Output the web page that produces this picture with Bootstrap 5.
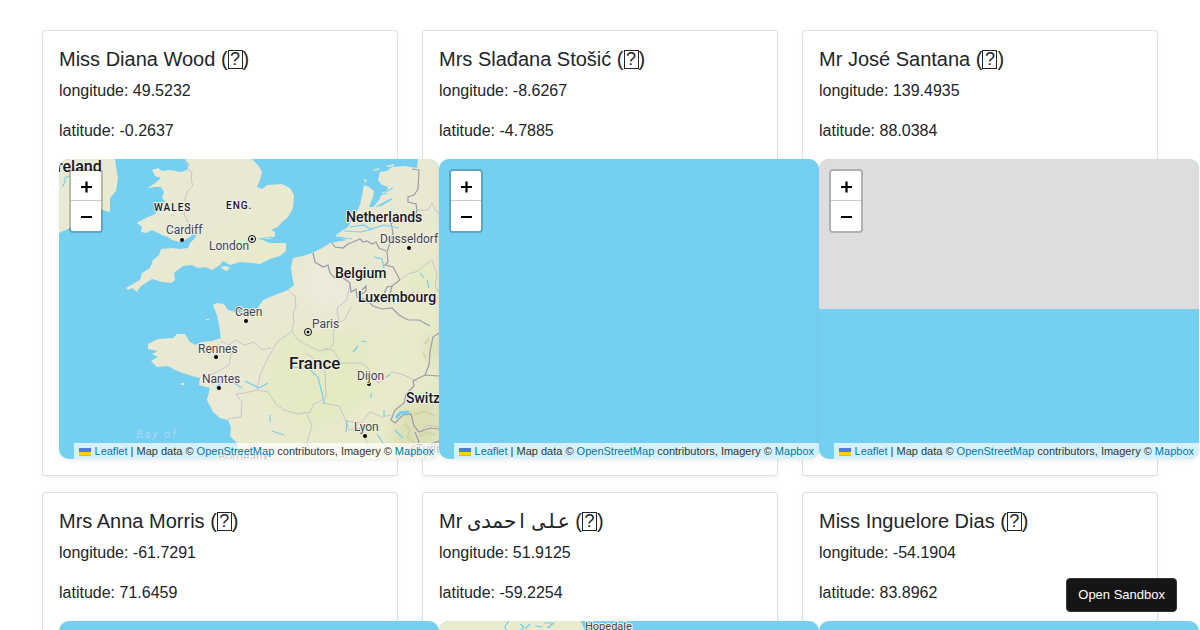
<!DOCTYPE html>
<html lang="en">
<head>
<meta charset="utf-8">
<meta name="viewport" content="width=device-width, initial-scale=1">
<title>People on the map</title>
<link href="https://cdn.jsdelivr.net/npm/bootstrap@5.3.0/dist/css/bootstrap.min.css" rel="stylesheet">
<style>
  body { font-family: "Liberation Sans", "DejaVu Sans Mono", sans-serif; }
  .page-body { padding-top: 30px; }
  .person-card { border-color: #dfdfdf; border-radius: 4px; }
  .no-glyph {
    display: inline-block; width: 15px; height: 19px; border: 1px solid currentColor;
    font-size: 18px; line-height: 17px; text-align: center; vertical-align: 1px;
  }
  /* the map is wider than its card and runs over the gutter and the next card's edge */
  .map-view {
    z-index: 1; margin-right: -58px; height: 300px; border-radius: 10px;
    background: #75cff0; overflow: hidden; font-size: 11px;
  }
  .map-view > svg { display: block; width: 100%; height: 100%; }
  .map-blank { height: 50%; background: #ddd; }
  .zoom-bar {
    top: 10px; left: 10px; border: 2px solid rgba(0,0,0,.2);
    border-radius: 4px; background-clip: padding-box; overflow: hidden;
  }
  .zoom-bar button {
    display: block; width: 30px; height: 30px; padding: 0; border: 0;
    background: #fff; color: #000;
  }
  .zoom-bar button:first-child { border-bottom: 1px solid #ccc; }
  .zoom-bar svg { display: block; margin: 2px auto 0; }
  .map-credit {
    right: 0; bottom: 0; padding: 0 5px; line-height: 16px; white-space: nowrap;
    background: rgba(255,255,255,.7); color: #333;
  }
  .map-credit a { color: #0078a8; text-decoration: none; }
  .sandbox-btn {
    right: 23px; bottom: 18px; z-index: 10; padding: 6px 11px;
    background: #151515; border: 1px solid #343434; border-radius: 4px;
    color: #fff; font-size: 13px; line-height: 20px;
  }
  .water { fill: none; stroke: #75cff0; stroke-width: 1.2; }
  .region { fill: none; stroke: #c6c5c8; stroke-width: 1; }
  .frontier { fill: none; stroke: #9c9aa9; stroke-width: 1.2; }
  .map-label { font-family: Roboto, sans-serif; paint-order: stroke; stroke: #f2f1e6; stroke-width: 2; stroke-linejoin: round; }
  .state-label { font-size: 14px; font-weight: 500; fill: #17181f; }
  .city-label { font-size: 12px; fill: #42444f; }
</style>
</head>
<body>
<svg width="0" height="0" class="position-absolute" aria-hidden="true">
  <symbol id="flag" viewBox="0 0 12 8"><path fill="#4C7BE1" d="M0 0h12v4H0z"/><path fill="#FFD500" d="M0 4h12v3H0z"/><path fill="#E0BC00" d="M0 7h12v1H0z"/></symbol>
  <symbol id="plus" viewBox="0 0 12 12"><path d="M6.500 .5v11M1 6h11" stroke="#000" stroke-width="2.200"/></symbol>
  <symbol id="minus" viewBox="0 0 12 12"><path d="M1 6h11" stroke="#000" stroke-width="2.200"/></symbol>
</svg>

<main class="container page-body">
  <div class="row">

    <div class="col-4 mb-3">
      <div class="card person-card shadow-sm">
        <div class="card-body">
          <h5 class="card-title">Miss Diana Wood (<span class="no-glyph">?</span>)</h5>
          <p>longitude: 49.5232</p>
          <p>latitude: -0.2637</p>
          <div class="map-view position-relative shadow-sm">
            <svg viewBox="59 159 380 300" preserveAspectRatio="xMidYMid slice" role="img" aria-label="Map of western Europe">
              <defs>
                <linearGradient id="land" x1="0" y1="0" x2="1" y2="1"><stop offset="0" stop-color="#e9ead2"/><stop offset=".5" stop-color="#e9e9d3"/><stop offset="1" stop-color="#e7ebc6"/></linearGradient>
                <filter id="soft" x="-50%" y="-50%" width="200%" height="200%"><feGaussianBlur stdDeviation="7"/></filter>
                <clipPath id="mainland"><path d="M418 159L417 168 405 166 392 167 387 171 380 172 378 180 382 185 388 187 387 190 382 193 379 200 373 207 369 207 371 202 373 197 374 191 369 187 364 185 362 195 360 205 355 215 348 227 340 232 335 236 347 240 330 243 322 248 312 253 303 256 293 258 291 267 292 276 294 285 288 290 275 295 263 300 257 309 250 312 240 313 228 310 224 304 217 303 213 305 217 315 219 325 221 338 212 341 202 342 195 345 190 342 185 334 177 334 173 338 158 339 148 344 148 349 158 351 152 354 158 357 151 361 157 367 168 366 175 370 183 373 192 376 200 378 199 385 210 388 207 400 213 412 220 418 228 420 231 427 230 436 237 443 240 459H439V159Z"/></clipPath>
              </defs>
              <g fill="url(#land)">
                <path d="M59 159H115L116 166 118 178 116 191 110 198 110 212 103 210 90 214 80 221 70 228 59 233Z"/>
                <path d="M185 159L189 165 187 170 180 172 170 170 162 171 158 168 152 170 155 176 161 178 155 183 148 188 155 187 161 187 164 192 162 198 165 201 161 207 155 214 148 217 140 221 137 223 142 227 141 232 146 233 152 230 162 235 168 237 172 240 180 242 185 240 190 237 194 233 198 232 195 238 190 243 188 248 180 249 172 248 161 249 159 255 153 260 150 268 142 273 140 280 133 284 126 288 128 290 132 288 137 292 140 287 147 282 152 279 162 282 171 283 175 280 174 273 183 266 192 265 198 268 205 267 212 270 220 265 223 261 230 265 240 262 252 263 260 264 270 259 280 256 286 251 286 243 270 243 260 239 270 239 275 236 275 232 271 230 278 227 281 223 287 218 291 212 293 208 294 195 290 188 282 184 267 185 262 189 257 187 260 180 262 172 258 165 252 159Z"/>
                <path d="M220 267L226 266 230 268 226 271ZM364 179L367 180 365 183ZM373 170l6-2 1 1-6 2ZM386 166l8-2v2l-7 1ZM206 319h3v1h-3ZM181 383h3v2h-3Z"/>
                <path d="M418 159L417 168 405 166 392 167 387 171 380 172 378 180 382 185 388 187 387 190 382 193 379 200 373 207 369 207 371 202 373 197 374 191 369 187 364 185 362 195 360 205 355 215 348 227 340 232 335 236 347 240 330 243 322 248 312 253 303 256 293 258 291 267 292 276 294 285 288 290 275 295 263 300 257 309 250 312 240 313 228 310 224 304 217 303 213 305 217 315 219 325 221 338 212 341 202 342 195 345 190 342 185 334 177 334 173 338 158 339 148 344 148 349 158 351 152 354 158 357 151 361 157 367 168 366 175 370 183 373 192 376 200 378 199 385 210 388 207 400 213 412 220 418 228 420 231 427 230 436 237 443 240 459H439V159Z"/>
              </g>
              <g clip-path="url(#mainland)">
                <g filter="url(#soft)">
                  <path fill="#d5d7a8" opacity=".6" d="M400 410l39-18v77h-55zM425 340l14-8v30l-12-5z"/>
                  <path fill="#e3e9bd" opacity=".6" d="M405 270l20-15 14 20v25l-20 8zM280 330l80 0 20 60-60 40-60-30z"/>
                  <path fill="#edeada" d="M310 260l30 15 15 25-30 10-25-15zM210 400l25-10 5 25-15 5z"/>
                </g>
                <path fill="none" stroke="#cdceA0" opacity=".7" stroke-width="2" d="M404 424l6 5-3 8 8 6M420 436l8-4 8 3M414 415l10-4 12 5M425 344l4-6M423 353l3 6"/>
              </g>
              <g class="region">
                <path d="M185 161l3 8 4 3-1 9 2 4-5 6-3 8 1 7-2 8 4 8 3 9 8 4"/>
                <path d="M288 290l7 6 1 10-3 8 1 8-2 9 6 9 7 4 14 7 10-2 5-6-1-10 3-8 9-6 6-12M292 331l-15 11-9 16-8 17-3 15 11 2 8 12 8 6 14 4 12-2 4-8 12-6-1-26-8-11-11-8M324 348l10 3 7 12 20 0 8 6 2 8 8 6 7-6 6-5 12 3 14 7M323 403l16 3 7 15 15 2 9-11 12 5 9-2M346 421l3 9 10-2 6 10 5 12M307 414l5 12-5 16 5 17M221 341l8 4 7-5 8 5 10-3 8 8 9-2M232 350l-3 15-12 7-10 4-4 5M257 390l-12 3-9 1 6 8-1 15-13 2"/>
                <path d="M417 210l11 0 4-7 3 7 4 4M400 280l8-6 10-3 10-8 4-3 5 14-2 12 4 6M350 283l-3 17-10 8 2 14M439 427l-12-2-8 8"/>
              </g>
              <g class="frontier">
                <path d="M412 169l7 1-1 19-4 6-6 2v5l8 2 1 6-2 7-12 3-12 3 2 10-4 13-2 6 1 10-3 3 8 2 7 13M332 243l3 4 8 1 5-4 5-2 7-3 3 3 4-1 5 3 4-2 3 6 7 3M313 253l2 9 8 5 5-2 2 8 5 5 7-1 8 6 1 9 5-3 1 8 10 3 6 6 9 3 10-1 7 7 9 5 11 0 11 6M400 280l-8 6-5 1-3 7 5 8M392 286l-2 8M362 290l4-4v5l-4 3"/>
                <path d="M439 333l-6 4-3 14-1 14-4 10 14 1M425 375l-12 6 1 5-8 8-2 9-9 7-4 10 4 3 8-8 8-1 3 12 5 6 11-4 9 1M415 432l4 10-8 7 3 10M425 459l3-14 11-4"/>
              </g>
              <g class="water">
                <path d="M62 187l3-5 0-4 4-2M242 388l-8-5-12-1-6 6M245 381l14 7 9-5M292 367l17 2 9 8 5 20 1 7M350 227l14-2 6 4 14-4 15 3M344 231l17 1 12-3M338 237l14 2M385 192l8-4M380 206l12-7M376 207l15-8M377 196l10-3M374 257l8 2 2 9M420 273l4 5M427 280l2 8M361 341l6 1M353 352l5-6M386 377l4-2M371 393v5M384 410v6M347 420l-1 12M270 415v7M272 431l12 4M377 434l8 12M395 430l8 8M400 412l10 1M272 237l-14 2"/>
                <path stroke-width="3" d="M396 418l4-5 9-1"/>
              </g>
              <g fill="#000">
                <circle cx="182" cy="240" r="2"/><circle cx="409" cy="248" r="2"/><circle cx="246" cy="321" r="2"/><circle cx="216" cy="357" r="2"/><circle cx="219" cy="388" r="2"/><circle cx="369" cy="384" r="2"/><circle cx="365" cy="436" r="2"/>
                <g id="capital"><circle cx="252" cy="239" r="3.500" fill="#fff" stroke="#000"/><circle cx="252" cy="239" r="1.500"/></g>
                <use href="#capital" x="56" y="93"/>
              </g>
              <g class="map-label state-label">
                <text x="57" y="172" style="font-size:16px">reland</text>
                <text x="346" y="222">Netherlands</text>
                <text x="335" y="278">Belgium</text>
                <text x="358" y="302">Luxembourg</text>
                <text x="289" y="369" style="font-size:17px">France</text>
                <text x="406" y="403">Switz</text>
                <text x="154" y="211" style="font-size:10px;letter-spacing:1px">WALES</text>
                <text x="226" y="209" style="font-size:10px;letter-spacing:1px">ENG.</text>
              </g>
              <g class="map-label city-label">
                <text x="166" y="234">Cardiff</text>
                <text x="209" y="250">London</text>
                <text x="380" y="243">Dusseldorf</text>
                <text x="235" y="316">Caen</text>
                <text x="312" y="328">Paris</text>
                <text x="198" y="353">Rennes</text>
                <text x="202" y="383">Nantes</text>
                <text x="357" y="380">Dijon</text>
                <text x="354" y="431">Lyon</text>
                <text x="218" y="461">Bordeaux</text>
                <text x="416" y="453">Turin</text>
              </g>
              <text x="136" y="438" font-family="Roboto, sans-serif" font-size="11" font-style="italic" letter-spacing="2" fill="#a9d8f5">Bay of</text>
            </svg>
            <div class="zoom-bar position-absolute">
              <button type="button" aria-label="Zoom in"><svg width="12" height="12"><use href="#plus"/></svg></button>
              <button type="button" aria-label="Zoom out"><svg width="12" height="12"><use href="#minus"/></svg></button>
            </div>
            <div class="map-credit position-absolute"><a href="#"><svg width="12" height="8"><use href="#flag"/></svg> Leaflet</a> | Map data © <a href="#">OpenStreetMap</a> contributors, Imagery © <a href="#">Mapbox</a></div>
          </div>
        </div>
      </div>
    </div>

    <div class="col-4 mb-3">
      <div class="card person-card shadow-sm">
        <div class="card-body">
          <h5 class="card-title">Mrs Slađana Stošić (<span class="no-glyph">?</span>)</h5>
          <p>longitude: -8.6267</p>
          <p>latitude: -4.7885</p>
          <div class="map-view position-relative shadow-sm">
            <div class="zoom-bar position-absolute">
              <button type="button" aria-label="Zoom in"><svg width="12" height="12"><use href="#plus"/></svg></button>
              <button type="button" aria-label="Zoom out"><svg width="12" height="12"><use href="#minus"/></svg></button>
            </div>
            <div class="map-credit position-absolute"><a href="#"><svg width="12" height="8"><use href="#flag"/></svg> Leaflet</a> | Map data © <a href="#">OpenStreetMap</a> contributors, Imagery © <a href="#">Mapbox</a></div>
          </div>
        </div>
      </div>
    </div>

    <div class="col-4 mb-3">
      <div class="card person-card shadow-sm">
        <div class="card-body">
          <h5 class="card-title">Mr José Santana (<span class="no-glyph">?</span>)</h5>
          <p>longitude: 139.4935</p>
          <p>latitude: 88.0384</p>
          <div class="map-view position-relative shadow-sm">
            <div class="map-blank"></div>
            <div class="zoom-bar position-absolute">
              <button type="button" aria-label="Zoom in"><svg width="12" height="12"><use href="#plus"/></svg></button>
              <button type="button" aria-label="Zoom out"><svg width="12" height="12"><use href="#minus"/></svg></button>
            </div>
            <div class="map-credit position-absolute"><a href="#"><svg width="12" height="8"><use href="#flag"/></svg> Leaflet</a> | Map data © <a href="#">OpenStreetMap</a> contributors, Imagery © <a href="#">Mapbox</a></div>
          </div>
        </div>
      </div>
    </div>

    <div class="col-4 mb-3">
      <div class="card person-card shadow-sm">
        <div class="card-body">
          <h5 class="card-title">Mrs Anna Morris (<span class="no-glyph">?</span>)</h5>
          <p>longitude: -61.7291</p>
          <p>latitude: 71.6459</p>
          <div class="map-view position-relative shadow-sm"></div>
        </div>
      </div>
    </div>

    <div class="col-4 mb-3">
      <div class="card person-card shadow-sm">
        <div class="card-body">
          <h5 class="card-title">Mr علی احمدی (<span class="no-glyph">?</span>)</h5>
          <p>longitude: 51.9125</p>
          <p>latitude: -59.2254</p>
          <div class="map-view position-relative shadow-sm">
            <svg viewBox="0 0 380 300" preserveAspectRatio="xMidYMid slice" role="img" aria-label="Map of Labrador">
              <path fill="#e9ebcf" d="M0 0H142L146 10 160 25 170 60 200 100 190 300H0Z"/>
              <path class="water" d="M70 0l-4 5 1 5M81 3l4 3-3 3M86 8l5-5M96 5l8 1M105 2l8 0-3 5M108 7l7-5"/>
              <text class="map-label city-label" x="146" y="9" style="font-size:11px">Hopedale</text>
            </svg>
          </div>
        </div>
      </div>
    </div>

    <div class="col-4 mb-3">
      <div class="card person-card shadow-sm">
        <div class="card-body">
          <h5 class="card-title">Miss Inguelore Dias (<span class="no-glyph">?</span>)</h5>
          <p>longitude: -54.1904</p>
          <p>latitude: 83.8962</p>
          <div class="map-view position-relative shadow-sm"></div>
        </div>
      </div>
    </div>

  </div>
</main>

<button type="button" class="sandbox-btn position-fixed">Open Sandbox</button>
<script src="https://cdn.jsdelivr.net/npm/bootstrap@5.3.0/dist/js/bootstrap.bundle.min.js"></script>
</body>
</html>
